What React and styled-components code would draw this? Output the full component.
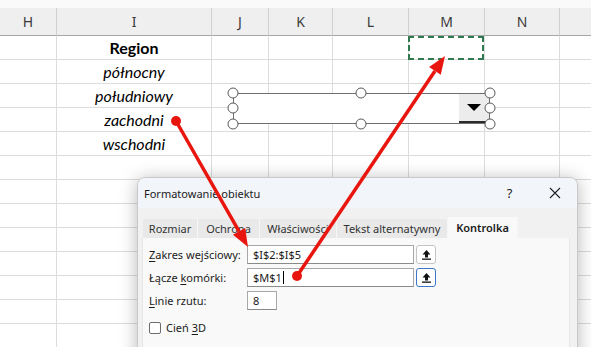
import React from "react";
import styled, { createGlobalStyle } from "styled-components";

const GlobalStyle = createGlobalStyle`
  html, body { margin: 0; padding: 0; background: #ffffff; overflow: hidden; }
`;

const COLS = [
  { name: "H", w: 57 },
  { name: "I", w: 155 },
  { name: "J", w: 57 },
  { name: "K", w: 64 },
  { name: "L", w: 76 },
  { name: "M", w: 76 },
  { name: "N", w: 75 },
  { name: "", w: 40 },
];

const REGIONS = [
  { text: "Region", bold: true },
  { text: "północny" },
  { text: "południowy" },
  { text: "zachodni" },
  { text: "wschodni" },
];

const Page = styled.div`
  position: relative;
  width: 591px;
  height: 347px;
  overflow: hidden;
  background: #fff;
`;

const Sheet = styled.div`
  padding-top: 8px;
  background: #fafafa;
`;

const Row = styled.div`
  display: grid;
  grid-template-columns: ${COLS.map((c) => c.w + "px").join(" ")};
  height: ${(p) => (p.$header ? 28 : 24)}px;
`;

const HeaderCell = styled.div`
  box-sizing: border-box;
  background: #efefef;
  border-right: 1px solid #d0d0d0;
  border-bottom: 1px solid #a6a6a6;
  display: flex;
  align-items: center;
  justify-content: center;
  font-family: "Noto Sans", sans-serif;
  font-size: 14px;
  color: #3a3a3a;
`;

const Cell = styled.div`
  position: relative;
  box-sizing: border-box;
  background: #fff;
  border-right: 1px solid #dcdcdc;
  border-bottom: 1px solid #dcdcdc;
  display: flex;
  align-items: center;
  justify-content: center;
  font-family: Lato, "Liberation Sans", sans-serif;
  font-size: 16px;
  color: #000;
  font-weight: ${(p) => (p.$bold ? 700 : 400)};
  font-style: ${(p) => (p.$italic ? "italic" : "normal")};
`;

// marching ants around the linked cell
const Marquee = styled.div`
  position: absolute;
  inset: 0 0 -1px -1px;
  border: 2px dashed #2f7a4f;
`;

const Combo = styled.div`
  position: absolute;
  left: 233px;
  top: 93px;
  width: 257px;
  height: 31px;
  box-sizing: border-box;
  background: #fff;
  border: 1px solid #6f6f6f;
  border-width: 1.5px 1px;
  display: flex;
  justify-content: flex-end;
`;

const DropButton = styled.div`
  width: 30px;
  height: 100%;
  box-sizing: border-box;
  background: #ececec;
  border-bottom: 2px solid #2b2b2b;
  display: flex;
  align-items: center;
  justify-content: center;
  &::after {
    content: "";
    border-left: 7px solid transparent;
    border-right: 7px solid transparent;
    border-top: 7px solid #000;
  }
`;

const Handle = styled.div`
  position: absolute;
  width: 11px;
  height: 11px;
  box-sizing: border-box;
  border-radius: 50%;
  background: #fff;
  border: 1.5px solid #5a5a5a;
  left: ${(p) => p.$x}px;
  top: ${(p) => p.$y}px;
  transform: translate(-50%, -50%);
`;

const Dialog = styled.div`
  position: absolute;
  left: 137px;
  top: 177px;
  width: 441px;
  height: 190px;
  box-sizing: border-box;
  border: 1px solid #c9c9c9;
  border-radius: 8px;
  background: #f1f1f1;
  box-shadow: 0 2px 18px rgba(0, 0, 0, 0.28);
  font-family: "Noto Sans", "Open Sans", sans-serif;
  font-size: 11px;
  color: #1b1b1b;
  overflow: hidden;
`;

const TitleBar = styled.div`
  height: 30px;
  display: flex;
  align-items: center;
  padding: 0 0 0 6px;
  background: #f2f5fa;
  font-size: 11px;
`;

const Title = styled.div`
  flex: 1;
`;

const TitleButton = styled.div`
  width: 45px;
  display: flex;
  justify-content: center;
  font-size: 13px;
  color: #222;
`;

const TabStrip = styled.div`
  display: flex;
  align-items: flex-end;
  height: 21px;
  margin-top: 9px;
  padding-left: 5px;
`;

const Tab = styled.div`
  width: ${(p) => p.$w}px;
  height: ${(p) => (p.$active ? 21 : 19)}px;
  box-sizing: border-box;
  display: flex;
  align-items: center;
  justify-content: center;
  background: ${(p) => (p.$active ? "#f9f9f9" : "#e9e9e9")};
  border-right: 1px solid #f6f6f6;
  font-weight: ${(p) => (p.$active ? 600 : 400)};
  color: ${(p) => (p.$active ? "#1b1b1b" : "#333")};
`;

const Panel = styled.div`
  margin: 0 7px 0 4px;
  height: 130px;
  background: #f9f9f9;
  border: 1px solid #e6e6e6;
  border-top: none;
  padding: 7px 6px;
  display: flex;
  flex-direction: column;
  gap: 4px;
`;

const FieldRow = styled.div`
  display: flex;
  align-items: center;
  height: 19px;
`;

const Label = styled.div`
  width: 98px;
  u { text-decoration: underline; text-underline-offset: 2px; }
`;

const Input = styled.div`
  width: ${(p) => p.$w}px;
  height: 19px;
  box-sizing: border-box;
  background: #fff;
  border: 1px solid #a8a8a8;
  border-bottom-color: #8a8a8a;
  padding-left: 5px;
  display: flex;
  align-items: center;
`;

const Caret = styled.span`
  display: inline-block;
  width: 1px;
  height: 13px;
  background: #000;
  margin-left: 1px;
`;

const PickButton = styled.div`
  width: 20px;
  height: 19px;
  margin-left: 2px;
  box-sizing: border-box;
  background: #fff;
  border: 1px solid ${(p) => (p.$focus ? "#3c78c8" : "#c4c4c4")};
  border-radius: 3px;
  display: flex;
  align-items: center;
  justify-content: center;
`;

const CheckRow = styled.div`
  display: flex;
  align-items: center;
  gap: 5px;
  margin-top: 6px;
  u { text-decoration: underline; text-underline-offset: 2px; }
`;

const Box = styled.div`
  width: 12px;
  height: 12px;
  box-sizing: border-box;
  border: 1px solid #6d6d6d;
  border-radius: 2px;
  background: #fff;
`;

const Overlay = styled.svg`
  position: absolute;
  left: 0;
  top: 0;
  pointer-events: none;
`;

const UpIcon = () => (
  <svg width="11" height="11" viewBox="0 0 11 11">
    <path d="M5.5 1 L1.5 5.5 H4 V8.5 H7 V5.5 H9.5 Z" fill="#111" />
    <rect x="1" y="9.5" width="9" height="1.3" fill="#111" />
  </svg>
);

const CloseIcon = () => (
  <svg width="12" height="12" viewBox="0 0 12 12">
    <path d="M1 1 L11 11 M11 1 L1 11" stroke="#222" strokeWidth="1.1" />
  </svg>
);

const arrowHead = (tx, ty, dx, dy) => {
  const len = Math.hypot(dx, dy);
  const ux = dx / len;
  const uy = dy / len;
  const bx = tx - ux * 18;
  const by = ty - uy * 18;
  const px = -uy * 7;
  const py = ux * 7;
  return {
    base: [bx, by],
    points: `${tx},${ty} ${bx + px},${by + py} ${bx - px},${by - py}`,
  };
};

const Arrow = ({ from, to }) => {
  const head = arrowHead(to[0], to[1], to[0] - from[0], to[1] - from[1]);
  return (
    <g fill="#e8160f" stroke="#e8160f">
      <circle cx={from[0]} cy={from[1]} r="5" stroke="none" />
      <line x1={from[0]} y1={from[1]} x2={head.base[0]} y2={head.base[1]} strokeWidth="3.5" />
      <polygon points={head.points} stroke="none" />
    </g>
  );
};

const HANDLES = [
  [233, 93], [361, 93], [490, 93],
  [233, 108], [490, 108],
  [233, 124], [361, 124], [490, 124],
];

export default function App() {
  const rows = Array.from({ length: 13 }, (_, i) => REGIONS[i] || null);
  return (
    <Page>
      <GlobalStyle />
      <Sheet>
        <Row $header>
          {COLS.map((c, i) => (
            <HeaderCell key={i}>{c.name}</HeaderCell>
          ))}
        </Row>
        {rows.map((r, ri) => (
          <Row key={ri}>
            {COLS.map((c, ci) => {
              if (c.name === "I" && r) {
                return (
                  <Cell key={ci} $bold={r.bold} $italic={!r.bold}>
                    {r.text}
                  </Cell>
                );
              }
              return (
                <Cell key={ci}>
                  {c.name === "M" && ri === 0 && <Marquee />}
                </Cell>
              );
            })}
          </Row>
        ))}
      </Sheet>

      <Combo>
        <DropButton />
      </Combo>
      {HANDLES.map(([x, y], i) => (
        <Handle key={i} $x={x} $y={y} />
      ))}

      <Dialog>
        <TitleBar>
          <Title>Formatowanie obiektu</Title>
          <TitleButton>?</TitleButton>
          <TitleButton><CloseIcon /></TitleButton>
        </TitleBar>
        <TabStrip>
          <Tab $w={55}>Rozmiar</Tab>
          <Tab $w={62}>Ochrona</Tab>
          <Tab $w={77}>Właściwości</Tab>
          <Tab $w={111}>Tekst alternatywny</Tab>
          <Tab $w={70} $active>Kontrolka</Tab>
        </TabStrip>
        <Panel>
          <FieldRow>
            <Label><u>Z</u>akres wejściowy:</Label>
            <Input $w={167}>$I$2:$I$5</Input>
            <PickButton><UpIcon /></PickButton>
          </FieldRow>
          <FieldRow>
            <Label>Łącze <u>k</u>omórki:</Label>
            <Input $w={167}>$M$1<Caret /></Input>
            <PickButton $focus><UpIcon /></PickButton>
          </FieldRow>
          <FieldRow>
            <Label><u>L</u>inie rzutu:</Label>
            <Input $w={30}>8</Input>
          </FieldRow>
          <CheckRow>
            <Box />
            <span>Cień <u>3</u>D</span>
          </CheckRow>
        </Panel>
      </Dialog>

      <Overlay width="591" height="347">
        <Arrow from={[176, 121]} to={[248, 247]} />
        <Arrow from={[297, 276]} to={[445, 56]} />
      </Overlay>
    </Page>
  );
}
